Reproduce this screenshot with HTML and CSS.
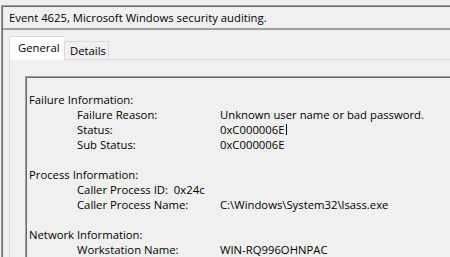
FILE: index.html
```html
<!DOCTYPE html>
<html>
<head>
<meta charset="utf-8">
<link rel="stylesheet" href="styles.css">
</head>
<body>
<div class="window">
  <div class="header">Event 4625, Microsoft Windows security auditing.</div>
  <div class="tabs">
    <div class="tab active">General</div>
    <div class="tab">Details</div>
  </div>
  <div class="pane">
    <div class="textbox">
      <div class="line">&nbsp;</div>
      <div class="line">Failure Information:</div>
      <div class="row"><span class="label">Failure Reason:</span><span>Unknown user name or bad password.</span></div>
      <div class="row"><span class="label">Status:</span><span>0xC000006E<span class="caret"></span></span></div>
      <div class="row"><span class="label">Sub Status:</span><span>0xC000006E</span></div>
      <div class="line">&nbsp;</div>
      <div class="line">Process Information:</div>
      <div class="row"><span>Caller Process ID:&nbsp; 0x24c</span></div>
      <div class="row"><span class="label">Caller Process Name:</span><span>C:\Windows\System32\lsass.exe</span></div>
      <div class="line">&nbsp;</div>
      <div class="line">Network Information:</div>
      <div class="row"><span class="label">Workstation Name:</span><span>WIN-RQ996OHNPAC</span></div>
    </div>
  </div>
</div>
</body>
</html>
```
FILE: styles.css
```css
html, body {
  margin: 0;
  padding: 0;
  background: #f0f0f0;
  overflow: hidden;
  width: 450px;
  height: 257px;
}
body {
  font-family: "Open Sans", "Noto Sans", sans-serif;
  font-size: 11.3px;
  color: #000;
}
.window {
  margin: 5px 0 0 1px;
  width: 448px;
  height: 251px;
  overflow: hidden;
  border-top: 1px solid #a0a0a0;
  border-left: 1px solid #a0a0a0;
  box-shadow: inset 1px 1px 0 #696969;
}
.header {
  height: 21px;
  line-height: 21px;
  padding: 1px 0 0 6px;
  border-bottom: 2px solid #a0a0a0;
  margin-left: 1px;
}
.tabs {
  display: flex;
  align-items: flex-end;
  margin: 6px 0 0 7px;
  height: 23px;
}
.tab {
  box-sizing: border-box;
  border: 1px solid #d9d9d9;
  border-bottom: none;
  background: #f0f0f0;
  height: 18px;
  line-height: 17px;
  padding: 0 0 0 5px;
  width: 45px;
}
.tab.active {
  background: #fff;
  height: 24px;
  width: 55px;
  padding: 3px 0 0 8px;
  line-height: 16px;
  position: relative;
  top: 1px;
  border-right: none;
}
.pane {
  margin-left: 7px;
  border-top: 1px solid #d9d9d9;
  border-left: 1px solid #d9d9d9;
  padding: 16px 0 0 15px;
  height: 200px;
}
.textbox {
  border-top: 1px solid #a0a0a0;
  border-left: 1px solid #a0a0a0;
  box-shadow: inset 1px 1px 0 #696969;
  padding: 0 0 0 3px;
  height: 200px;
}
.line, .row {
  height: 15px;
  line-height: 15px;
  white-space: nowrap;
}
.row {
  display: flex;
  padding-left: 48px;
}
.label {
  width: 143px;
  flex: none;
}
.caret {
  display: inline-block;
  width: 1px;
  height: 11px;
  background: #000;
  margin-left: 1px;
  vertical-align: -1px;
}
```
